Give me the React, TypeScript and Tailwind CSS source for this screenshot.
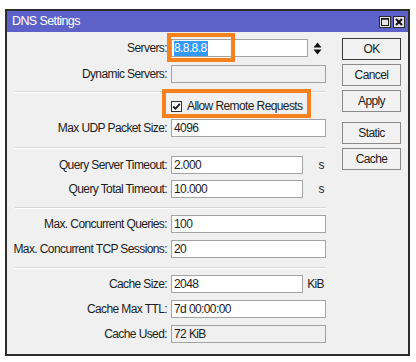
import React from "react";

function Row({ label, mt, children }: { label: string; mt: string; children?: React.ReactNode }) {
  return (
    <div className={`flex items-center h-[18px] ${mt}`}>
      <span className="w-[160px] text-right whitespace-nowrap leading-none">{label}</span>
      <div className="ml-[4px] flex items-center">{children}</div>
    </div>
  );
}

function Field({ value, w, disabled }: { value?: React.ReactNode; w: string; disabled?: boolean }) {
  return (
    <div
      className={`${w} h-[18px] border border-[#a3a3a3] flex items-center pl-[2px] leading-none whitespace-nowrap ${
        disabled ? "bg-[#f0f0f0]" : "bg-white"
      }`}
    >
      {value}
    </div>
  );
}

function Sep({ mt }: { mt: string }) {
  return (
    <div className={`${mt} ml-[8px] w-[311px] h-[2px] flex flex-col`}>
      <div className="h-[1px] bg-[#d6d6d6]" />
      <div className="h-[1px] bg-white" />
    </div>
  );
}

function Btn({ label, mt, strong }: { label: string; mt?: string; strong?: boolean }) {
  return (
    <div
      className={`h-[22px] w-[59px] flex items-center justify-center border ${
        strong ? "border-[#3a3a3a]" : "border-[#8a8a8a]"
      } bg-[#f2f2f2] leading-none ${mt ?? ""}`}
    >
      {label}
    </div>
  );
}

function Unit({ t }: { t: string }) {
  return <span className="w-[23px] text-right pr-[2px] leading-none">{t}</span>;
}

export default function App() {
  return (
    <div className="relative w-[416px] h-[362px] bg-white overflow-hidden font-['Liberation_Sans',Arial,sans-serif] text-[12px] tracking-[-0.6px] text-[#1c1c1c]">
      <div className="ml-[5px] mt-[9px] w-[405px] h-[347px] border-2 border-[#2e2e2e] bg-[#f0f0f0] flex flex-col">
        <div className="h-[21px] bg-[#5d62c8] flex items-center pl-[5px] pr-[3px]">
          <span className="text-white text-[12.5px] leading-none">DNS Settings</span>
          <div className="ml-auto flex gap-[2px]">
            <svg width="12" height="12" viewBox="0 0 12 12">
              <rect x="0.5" y="0.5" width="11" height="11" fill="#e6e6e6" stroke="#2a2a2a" />
              <rect x="2.5" y="2.5" width="7" height="7" fill="none" stroke="#1a1a1a" />
              <line x1="2.5" y1="3" x2="9.5" y2="3" stroke="#1a1a1a" strokeWidth="1.5" />
            </svg>
            <svg width="12" height="12" viewBox="0 0 12 12">
              <rect x="0.5" y="0.5" width="11" height="11" fill="#e6e6e6" stroke="#2a2a2a" />
              <path d="M3 3 L9 9 M9 3 L3 9" stroke="#111" strokeWidth="2" />
            </svg>
          </div>
        </div>
        <div className="flex flex-1">
          <div className="w-[335px] flex flex-col">
            <Row label="Servers:" mt="mt-[7px]">
              <Field
                w="w-[137px]"
                value={<span className="bg-[#3399ff] text-white h-[15px] flex items-center pr-[1px]">8.8.8.8</span>}
              />
              <svg className="ml-[5px]" width="9" height="13" viewBox="0 0 9 13">
                <path d="M4.5 0.5 L8.5 5.5 L0.5 5.5 Z" fill="#111" />
                <path d="M0.5 7.5 L8.5 7.5 L4.5 12.5 Z" fill="#111" />
              </svg>
            </Row>
            <Row label="Dynamic Servers:" mt="mt-[8px]">
              <Field w="w-[155px]" disabled />
            </Row>
            <Sep mt="mt-[8px]" />
            <div className="flex items-center h-[18px] mt-[4px]">
              <div className="w-[164px]" />
              <div className="w-[11px] h-[11px] border border-[#333] bg-white flex items-center justify-center">
                <svg width="9" height="9" viewBox="0 0 9 9">
                  <path d="M1.2 4.5 L3.5 6.8 L7.8 1.8" fill="none" stroke="#111" strokeWidth="1.8" />
                </svg>
              </div>
              <span className="ml-[5px] leading-none">Allow Remote Requests</span>
            </div>
            <Row label="Max UDP Packet Size:" mt="mt-[4px]">
              <Field w="w-[155px]" value="4096" />
            </Row>
            <Sep mt="mt-[10px]" />
            <Row label="Query Server Timeout:" mt="mt-[7px]">
              <Field w="w-[132px]" value="2.000" />
              <Unit t="s" />
            </Row>
            <Row label="Query Total Timeout:" mt="mt-[6px]">
              <Field w="w-[132px]" value="10.000" />
              <Unit t="s" />
            </Row>
            <Sep mt="mt-[9px]" />
            <Row label="Max. Concurrent Queries:" mt="mt-[6px]">
              <Field w="w-[155px]" value="100" />
            </Row>
            <Row label="Max. Concurrent TCP Sessions:" mt="mt-[7px]">
              <Field w="w-[155px]" value="20" />
            </Row>
            <Sep mt="mt-[9px]" />
            <Row label="Cache Size:" mt="mt-[6px]">
              <Field w="w-[132px]" value="2048" />
              <Unit t="KiB" />
            </Row>
            <Row label="Cache Max TTL:" mt="mt-[7px]">
              <Field w="w-[155px]" value="7d 00:00:00" />
            </Row>
            <Row label="Cache Used:" mt="mt-[7px]">
              <Field w="w-[155px]" value="72 KiB" disabled />
            </Row>
          </div>
          <div className="w-[59px] flex flex-col pt-[6px] gap-[4px]">
            <Btn label="OK" strong />
            <Btn label="Cancel" />
            <Btn label="Apply" />
            <Btn label="Static" mt="mt-[6px]" />
            <Btn label="Cache" />
          </div>
        </div>
      </div>
      <div className="absolute left-[167px] top-[33px] w-[68px] h-[29px] border-4 border-[#f5821f]" />
      <div className="absolute left-[162px] top-[89px] w-[149px] h-[29px] border-4 border-[#f5821f]" />
    </div>
  );
}
